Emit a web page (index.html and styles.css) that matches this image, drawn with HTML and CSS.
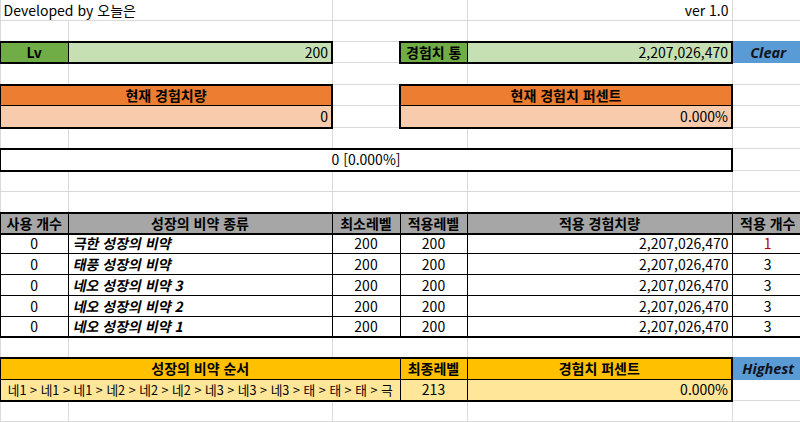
FILE: index.html
```html
<!DOCTYPE html>
<html lang="ko">
<head>
<meta charset="utf-8">
<title>성장의 비약 계산기</title>
<link rel="stylesheet" href="styles.css">
</head>
<body>
<table class="sheet">
  <colgroup>
    <col class="ca"><col class="cb"><col class="cc"><col class="cd"><col class="ce"><col class="cf">
  </colgroup>
  <tr class="h21">
    <td colspan="2" class="title">Developed by 오늘은</td><td colspan="2"></td><td class="r">ver 1.0</td><td></td>
  </tr>
  <tr class="h21"><td></td><td></td><td colspan="2"></td><td></td><td></td></tr>
  <tr class="h21">
    <td class="bx t b l g1 c bold">Lv</td>
    <td class="bx t b rr g2 r">200</td>
    <td></td>
    <td class="bx t b l g1 c bold">경험치 통</td>
    <td class="bx t b rr g2 r">2,207,026,470</td>
    <td class="blue c btn">Clear</td>
  </tr>
  <tr class="h22"><td></td><td></td><td colspan="2"></td><td></td><td></td></tr>
  <tr class="h21">
    <td colspan="2" class="bx t l rr or c bold">현재 경험치량</td>
    <td></td>
    <td colspan="2" class="bx t l rr or c bold">현재 경험치 퍼센트</td>
    <td></td>
  </tr>
  <tr class="h22">
    <td colspan="2" class="bx b l rr lor r">0</td>
    <td></td>
    <td colspan="2" class="bx b l rr lor r">0.000%</td>
    <td></td>
  </tr>
  <tr class="h21"><td></td><td></td><td colspan="2"></td><td></td><td></td></tr>
  <tr class="h22">
    <td colspan="5" class="bx t b l rr c">0 [0.000%]</td>
    <td></td>
  </tr>
  <tr class="h21"><td></td><td></td><td colspan="2"></td><td></td><td></td></tr>
  <tr class="h21"><td></td><td></td><td colspan="2"></td><td></td><td></td></tr>
  <tr class="h21 head">
    <td class="bx t l b">사용 개수</td>
    <td class="bx t b">성장의 비약 종류</td>
    <td class="bx t b">최소레벨</td>
    <td class="bx t b">적용레벨</td>
    <td class="bx t b">적용 경험치량</td>
    <td class="bx t b rr">적용 개수</td>
  </tr>
  <tr class="h20 data">
    <td class="bx l c">0</td><td class="bx name"><span class="slant">극한 성장의 비약</span></td><td class="bx c">200</td><td class="bx c">200</td><td class="bx r">2,207,026,470</td><td class="bx rr c red">1</td>
  </tr>
  <tr class="h21 data">
    <td class="bx l c">0</td><td class="bx name"><span class="slant">태풍 성장의 비약</span></td><td class="bx c">200</td><td class="bx c">200</td><td class="bx r">2,207,026,470</td><td class="bx rr c">3</td>
  </tr>
  <tr class="h21 data">
    <td class="bx l c">0</td><td class="bx name"><span class="slant">네오 성장의 비약 3</span></td><td class="bx c">200</td><td class="bx c">200</td><td class="bx r">2,207,026,470</td><td class="bx rr c">3</td>
  </tr>
  <tr class="h21 data">
    <td class="bx l c">0</td><td class="bx name"><span class="slant">네오 성장의 비약 2</span></td><td class="bx c">200</td><td class="bx c">200</td><td class="bx r">2,207,026,470</td><td class="bx rr c">3</td>
  </tr>
  <tr class="h20 data">
    <td class="bx l b c">0</td><td class="bx b name"><span class="slant">네오 성장의 비약 1</span></td><td class="bx b c">200</td><td class="bx b c">200</td><td class="bx b r">2,207,026,470</td><td class="bx b rr c">3</td>
  </tr>
  <tr class="h21"><td></td><td></td><td colspan="2"></td><td></td><td></td></tr>
  <tr class="h22">
    <td colspan="3" class="bx t l yel c bold">성장의 비약 순서</td>
    <td class="bx t yel c bold">최종레벨</td>
    <td class="bx t rr yel c bold">경험치 퍼센트</td>
    <td class="blue c btn">Highest</td>
  </tr>
  <tr class="h21">
    <td colspan="3" class="bx b l lyel c seq">네1 &gt; 네1 &gt; 네1 &gt; 네2 &gt; 네2 &gt; 네2 &gt; 네3 &gt; 네3 &gt; 네3 &gt; 태 &gt; 태 &gt; 태 &gt; 극</td>
    <td class="bx b lyel c">213</td>
    <td class="bx b rr lyel r">0.000%</td>
    <td></td>
  </tr>
  <tr class="h21"><td></td><td></td><td colspan="2"></td><td></td><td></td></tr>
</table>
</body>
</html>
```

FILE: styles.css
```css
html, body {
  margin: 0;
  padding: 0;
  overflow: hidden;
  background: #fff;
}

body {
  font-family: "Noto Sans CJK KR", "Noto Sans", sans-serif;
  font-size: 14px;
  color: #000;
}

.sheet {
  border-collapse: collapse;
  table-layout: fixed;
  width: 804px;
  margin: -1px 0 0 -1px;
}

.ca { width: 68px; }
.cb { width: 264px; }
.cc { width: 68px; }
.cd { width: 67px; }
.ce { width: 265px; }
.cf { width: 72px; }

.h20 { height: 20px; }
.h21 { height: 21px; }
.h22 { height: 22px; }

.sheet td {
  border: 1px solid #d9d9d9;
  padding: 0 3px;
  white-space: nowrap;
  overflow: hidden;
  line-height: 17px;
  vertical-align: middle;
}

.sheet td.bx { border: 1px solid #000; }
.sheet td.t { border-top: 2px solid #000; }
.sheet td.b { border-bottom: 2px solid #000; }
.sheet td.l { border-left: 2px solid #000; }
.sheet td.rr { border-right: 2px solid #000; }

.c { text-align: center; }
.r { text-align: right; }
.bold { font-weight: 700; }

.title { padding-left: 3px; }

.g1 { background: #70ad47; }
.g2 { background: #c6e0b4; }
.or { background: #ed7d31; }
.lor { background: #f8cbad; }
.yel { background: #ffc000; }
.lyel { background: #ffe699; }

.sheet td.blue {
  background: #5b9bd5;
  border: 1px double #5b9bd5;
}

.btn {
  font-family: "Open Sans", "Noto Sans", sans-serif;
  font-weight: 700;
  font-style: italic;
  font-size: 14.5px;
  color: #10131c;
}

.head td {
  background: #a6a6a6;
  text-align: center;
  font-weight: 700;
}

.name {
  font-weight: 700;
  padding-left: 5px;
}

.slant {
  display: inline-block;
  transform: skewX(-12deg);
  transform-origin: left bottom;
}

.red { color: #c00000; }

.seq {
  font-size: 12.7px;
  padding: 0 1px;
  letter-spacing: 0;
}
```
